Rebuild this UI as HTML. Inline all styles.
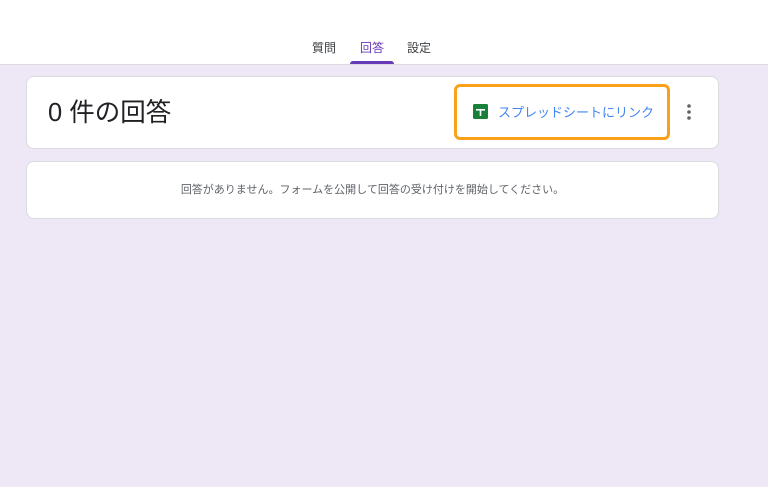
<!DOCTYPE html>
<html><head><meta charset="utf-8"><style>
*{margin:0;padding:0;box-sizing:border-box}
body{width:768px;height:487px;background:#ede7f6;font-family:"Liberation Sans","Noto Sans CJK JP",sans-serif;position:relative;overflow:hidden}
.hdr{position:absolute;left:0;top:0;width:768px;height:65px;background:#fff;border-bottom:1px solid #dadce0}
.tab{position:absolute;top:39px;font-size:12px;color:#3c4043}
.ul{position:absolute;left:350px;top:61px;width:44px;height:3px;background:#673ab7;border-radius:3px 3px 0 0}
.card{position:absolute;left:26px;width:693px;background:#fff;border:1px solid #dadce0;border-radius:8px}
.ob{position:absolute;left:454px;top:84px;width:216px;height:56px;border:3px solid #f9a11b;border-radius:6px}
</style></head><body>
<div class="hdr">
<div class="tab" style="left:312px">質問</div>
<div class="tab" style="left:360px;color:#673ab7">回答</div>
<div class="tab" style="left:407px">設定</div>
<div class="ul"></div>
</div>
<div class="card" style="top:76px;height:73px">
<div style="position:absolute;left:21px;top:15px;font-size:25.5px;color:#202124">0 件の回答</div>
</div>
<div class="ob"></div>
<svg style="position:absolute;left:473px;top:104px" width="15" height="15"><rect width="15" height="15" rx="1.5" fill="#188038"/><rect x="3" y="5" width="9" height="1.6" fill="#fff"/><rect x="6.7" y="5" width="1.6" height="7" fill="#fff"/></svg>
<div style="position:absolute;left:498px;top:102px;font-size:13px;color:#4285f4">スプレッドシートにリンク</div>
<svg style="position:absolute;left:686px;top:103px" width="6" height="18"><circle cx="3" cy="3" r="1.8" fill="#5f6368"/><circle cx="3" cy="9" r="1.8" fill="#5f6368"/><circle cx="3" cy="15" r="1.8" fill="#5f6368"/></svg>
<div class="card" style="top:161px;height:58px">
<div style="position:absolute;left:0;width:100%;top:19px;text-align:center;font-size:11px;color:#5f6368">回答がありません。フォームを公開して回答の受け付けを開始してください。</div>
</div>
</body></html>
